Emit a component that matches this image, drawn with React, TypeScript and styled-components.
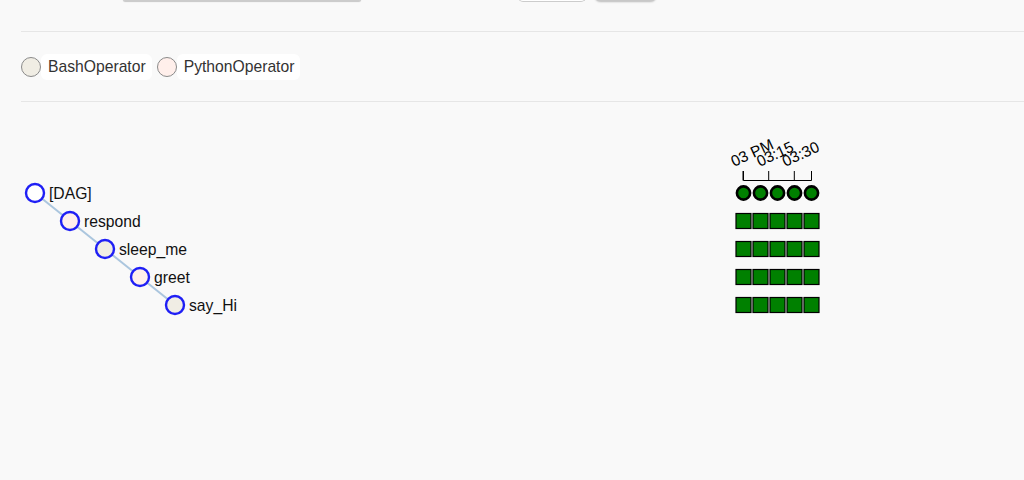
import React from "react";
import styled, { createGlobalStyle } from "styled-components";

const Global = createGlobalStyle`
  html, body { margin: 0; padding: 0; background: #f9f9f9; }
  body { font-family: "Liberation Sans", Arial, sans-serif; color: #333; overflow: hidden; }
`;

const Page = styled.div`
  width: 1024px;
  height: 480px;
  overflow: hidden;
  display: flex;
  flex-direction: column;
`;

const Toolbar = styled.div`
  height: 31px;
  flex: none;
  display: flex;
  align-items: flex-start;
  overflow: hidden;
`;

const SearchInput = styled.div`
  margin-top: -22px;
  margin-left: 123px;
  width: 236px;
  height: 22px;
  background: #fff;
  border: 1px solid #ccc;
  border-top: none;
  box-shadow: 0 1px 1px rgba(0, 0, 0, 0.2);
  border-radius: 0 0 2px 2px;
`;

const Button = styled.div<{ $primary?: boolean }>`
  margin-top: -22px;
  margin-left: ${(p) => (p.$primary ? "9px" : "157px")};
  width: ${(p) => (p.$primary ? "59px" : "66px")};
  height: ${(p) => (p.$primary ? "22px" : "23px")};
  background: ${(p) => (p.$primary ? "#e0e0e0" : "#fff")};
  border: 1px solid ${(p) => (p.$primary ? "#c8c8c8" : "#ccc")};
  border-top: none;
  border-radius: 0 0 5px 5px;
  box-shadow: ${(p) => (p.$primary ? "0 1px 2px rgba(0,0,0,0.25)" : "none")};
`;

const Rule = styled.div`
  height: 1px;
  flex: none;
  margin-left: 21px;
  background: #e6e6e6;
`;

const Legend = styled.div`
  height: 69px;
  flex: none;
  display: flex;
  align-items: center;
  padding-left: 21px;
  gap: 5px;
`;

const LegendItem = styled.div`
  display: flex;
  align-items: center;
`;

const LegendCircle = styled.div<{ $fill: string }>`
  width: 18px;
  height: 18px;
  box-sizing: content-box;
  border: 1.5px solid #8a8a8a;
  border-radius: 50%;
  background: ${(p) => p.$fill};
`;

const LegendLabel = styled.div`
  height: 26px;
  line-height: 26px;
  padding: 0 6px 0 7px;
  background: #fff;
  border-radius: 6px;
  font-size: 15.7px;
  color: #333;
`;

const Chart = styled.svg`
  display: block;
  flex: none;
  font-family: "Liberation Sans", Arial, sans-serif;
`;

const BASH = "#f0ede4";
const PY = "#ffefeb";

const nodes = [
  { name: "[DAG]", fill: "#fff" },
  { name: "respond", fill: PY },
  { name: "sleep_me", fill: BASH },
  { name: "greet", fill: PY },
  { name: "say_Hi", fill: BASH },
];

const TreeChart: React.FC = () => {
  const nx = (i: number) => 35 + i * 35;
  const ny = (i: number) => 91 + i * 28;
  const cols = [0, 1, 2, 3, 4];
  const ticks = [
    { x: 743, label: "03 PM" },
    { x: 768.7, label: "03:15" },
    { x: 794.3, label: "03:30" },
  ];
  return (
    <Chart width={1024} height={378} viewBox="0 0 1024 378">
      {nodes.slice(1).map((_, k) => (
        <line
          key={"l" + k}
          x1={nx(k)}
          y1={ny(k)}
          x2={nx(k + 1)}
          y2={ny(k + 1)}
          stroke="#abc6de"
          strokeWidth={2}
        />
      ))}
      {nodes.map((n, i) => (
        <g key={n.name} transform={`translate(${nx(i)},${ny(i)})`}>
          <circle r={9} fill={n.fill} stroke="#1f1ff5" strokeWidth={2.4} />
          <text x={14} dy="0.36em" fontSize={15.7} fill="#111">
            {n.name}
          </text>
        </g>
      ))}

      <path d="M743.5,69V78.5H811.5V69" fill="none" stroke="#000" strokeWidth={1} />
      {ticks.map((t) => (
        <g key={t.label}>
          <line x1={t.x} x2={t.x} y1={69} y2={78.5} stroke="#000" strokeWidth={1} />
          <text
            transform={`translate(${t.x - 9},${65}) rotate(-25)`}
            fontSize={15.5}
            fill="#000"
          >
            {t.label}
          </text>
        </g>
      ))}

      {cols.map((c) => (
        <circle
          key={"c" + c}
          cx={743.5 + c * 17}
          cy={91}
          r={6.6}
          fill="#008000"
          stroke="#000"
          strokeWidth={2.6}
        />
      ))}
      {[1, 2, 3, 4].map((r) =>
        cols.map((c) => (
          <rect
            key={`s${r}-${c}`}
            x={736 + c * 17}
            y={ny(r) - 7.5}
            width={15}
            height={15}
            fill="#008000"
            stroke="#000"
            strokeWidth={1.2}
          />
        ))
      )}
    </Chart>
  );
};

export default function App() {
  return (
    <Page>
      <Global />
      <Toolbar>
        <SearchInput />
        <Button />
        <Button $primary />
      </Toolbar>
      <Rule />
      <Legend>
        <LegendItem>
          <LegendCircle $fill={BASH} />
          <LegendLabel>BashOperator</LegendLabel>
        </LegendItem>
        <LegendItem>
          <LegendCircle $fill={PY} />
          <LegendLabel>PythonOperator</LegendLabel>
        </LegendItem>
      </Legend>
      <Rule />
      <TreeChart />
    </Page>
  );
}
